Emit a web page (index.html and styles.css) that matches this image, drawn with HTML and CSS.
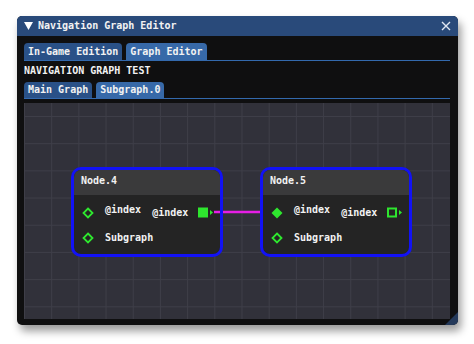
FILE: index.html
```html
<!DOCTYPE html>
<html lang="en">
<head>
    <meta charset="UTF-8">
    <meta name="viewport" content="width=device-width, initial-scale=1.0">
    <title>Navigation Graph Editor</title>
    <link rel="stylesheet" href="styles.css">
</head>
<body>
    <div class="window">
        <div class="titlebar">
            <svg class="collapse" width="9" height="8" viewBox="0 0 9 8">
                <path d="M 0 0 L 9 0 L 4.5 8 Z" fill="#ffffff"/>
            </svg>
            <span class="title">Navigation Graph Editor</span>
            <svg class="close" width="10" height="10" viewBox="0 0 10 10">
                <path d="M 1 1 L 9 9 M 9 1 L 1 9" stroke="#dfe6f2" stroke-width="1.4"/>
            </svg>
        </div>

        <div class="content">
            <div class="tabbar">
                <div class="tab">In-Game Edition</div>
                <div class="tab active">Graph Editor</div>
            </div>

            <div class="heading">NAVIGATION GRAPH TEST</div>

            <div class="tabbar sub">
                <div class="tab">Main Graph</div>
                <div class="tab active">Subgraph.0</div>
            </div>

            <div class="canvas">
                <!-- Nodurile stau pe canvas liber, la coordonatele lor -->
                <div class="node node-4">
                    <div class="node-header">Node.4</div>
                    <div class="node-body">
                        <div class="row">
                            <svg class="pin-in" width="12" height="12" viewBox="0 0 12 12">
                                <path d="M 6 1.5 L 10.5 6 L 6 10.5 L 1.5 6 Z" fill="none" stroke="#2ee62e" stroke-width="1.8"/>
                            </svg>
                            <span class="label raised">@index</span>
                            <span class="label out">@index</span>
                            <svg class="pin-out" width="16" height="11" viewBox="0 0 16 11">
                                <rect x="0" y="0.5" width="10" height="10" fill="#2ee62e"/>
                                <path d="M 12 3 L 15 5.5 L 12 8 Z" fill="#2ee62e"/>
                            </svg>
                        </div>
                        <div class="row">
                            <svg class="pin-in" width="12" height="12" viewBox="0 0 12 12">
                                <path d="M 6 1.5 L 10.5 6 L 6 10.5 L 1.5 6 Z" fill="none" stroke="#2ee62e" stroke-width="1.8"/>
                            </svg>
                            <span class="label">Subgraph</span>
                        </div>
                    </div>
                </div>

                <div class="node node-5">
                    <div class="node-header">Node.5</div>
                    <div class="node-body">
                        <div class="row">
                            <svg class="pin-in" width="12" height="12" viewBox="0 0 12 12">
                                <path d="M 6 0.5 L 11.5 6 L 6 11.5 L 0.5 6 Z" fill="#2ee62e"/>
                            </svg>
                            <span class="label raised">@index</span>
                            <span class="label out">@index</span>
                            <svg class="pin-out" width="16" height="11" viewBox="0 0 16 11">
                                <rect x="1" y="1.5" width="8" height="8" fill="none" stroke="#2ee62e" stroke-width="2"/>
                                <path d="M 12 3 L 15 5.5 L 12 8 Z" fill="#2ee62e"/>
                            </svg>
                        </div>
                        <div class="row">
                            <svg class="pin-in" width="12" height="12" viewBox="0 0 12 12">
                                <path d="M 6 1.5 L 10.5 6 L 6 10.5 L 1.5 6 Z" fill="none" stroke="#2ee62e" stroke-width="1.8"/>
                            </svg>
                            <span class="label">Subgraph</span>
                        </div>
                    </div>
                </div>

                <!-- Legatura dintre Node.4 si Node.5 -->
                <svg class="links" width="426" height="216">
                    <line x1="190" y1="109" x2="196" y2="109" stroke="#e61ee6" stroke-width="2.5"/>
                    <line x1="199" y1="109" x2="236" y2="109" stroke="#e61ee6" stroke-width="2.5"/>
                </svg>
            </div>
        </div>

        <div class="grip"></div>
    </div>
</body>
</html>
```

FILE: styles.css
```css
body {
    margin: 0;
    padding: 16px 17px;
    background-color: #ffffff;
    font-family: "DejaVu Sans Mono", "Liberation Mono", monospace;
    font-size: 10px;
    font-weight: bold;
    color: #f2f2f2;
}

.window {
    position: relative;
    width: 441px;
    height: 309px;
    background-color: #0f0f10;
    border-radius: 5px;
    overflow: hidden;
    box-shadow: 3px 6px 9px rgba(0,0,0,0.4);
}

.titlebar {
    display: flex;
    align-items: center;
    height: 20px;
    padding: 0 7px;
    background-color: #294a7a;
}

.collapse {
    margin-right: 5px;
}

.title {
    flex: 1;
    line-height: 20px;
}

.content {
    padding: 7px 8px 6px 7px;
}

.tabbar {
    display: flex;
    gap: 4px;
    height: 17px;
    border-bottom: 1px solid #3369ad;
}

.tab {
    padding: 0 4px;
    line-height: 17px;
    background-color: #2a5187;
    border-radius: 4px 4px 0 0;
}

.tab.active {
    background-color: #3769a8;
}

.tabbar.sub {
    height: 16px;
}

.tabbar.sub .tab {
    line-height: 16px;
}

.heading {
    padding: 3px 0 4px;
    line-height: 14px;
}

.canvas {
    position: relative;
    margin-top: 4px;
    height: 216px;
    background-color: #31313a;
    background-image:
        linear-gradient(to right, #3e3e48 1px, transparent 1px),
        linear-gradient(to bottom, #3e3e48 1px, transparent 1px);
    background-size: 27.2px 27.2px;
    background-position: 0 13px;
    overflow: hidden;
}

.node {
    position: absolute;
    top: 64px;
    width: 152px;
    height: 90px;
    box-sizing: border-box;
    border: 3px solid #1212f5;
    border-radius: 10px;
    background-color: #242424;
    overflow: hidden;
    z-index: 1;
}

.node-4 {
    left: 47px;
}

.node-5 {
    left: 236px;
}

.node-header {
    height: 25px;
    line-height: 22px;
    padding-left: 7px;
    background-color: #3a3a3b;
}

.node-body {
    padding-top: 5px;
}

.row {
    display: flex;
    align-items: center;
    height: 25px;
}

.pin-in {
    margin-left: 8px;
    margin-right: 11px;
}

.label.raised {
    padding-bottom: 6px;
}

.label.out {
    margin-left: 11px;
    margin-right: 10px;
}

.links {
    position: absolute;
    left: 0;
    top: 0;
    z-index: 2;
}

.grip {
    position: absolute;
    right: 0;
    bottom: 0;
    width: 0;
    height: 0;
    border-left: 13px solid transparent;
    border-bottom: 13px solid #24395a;
}
```
